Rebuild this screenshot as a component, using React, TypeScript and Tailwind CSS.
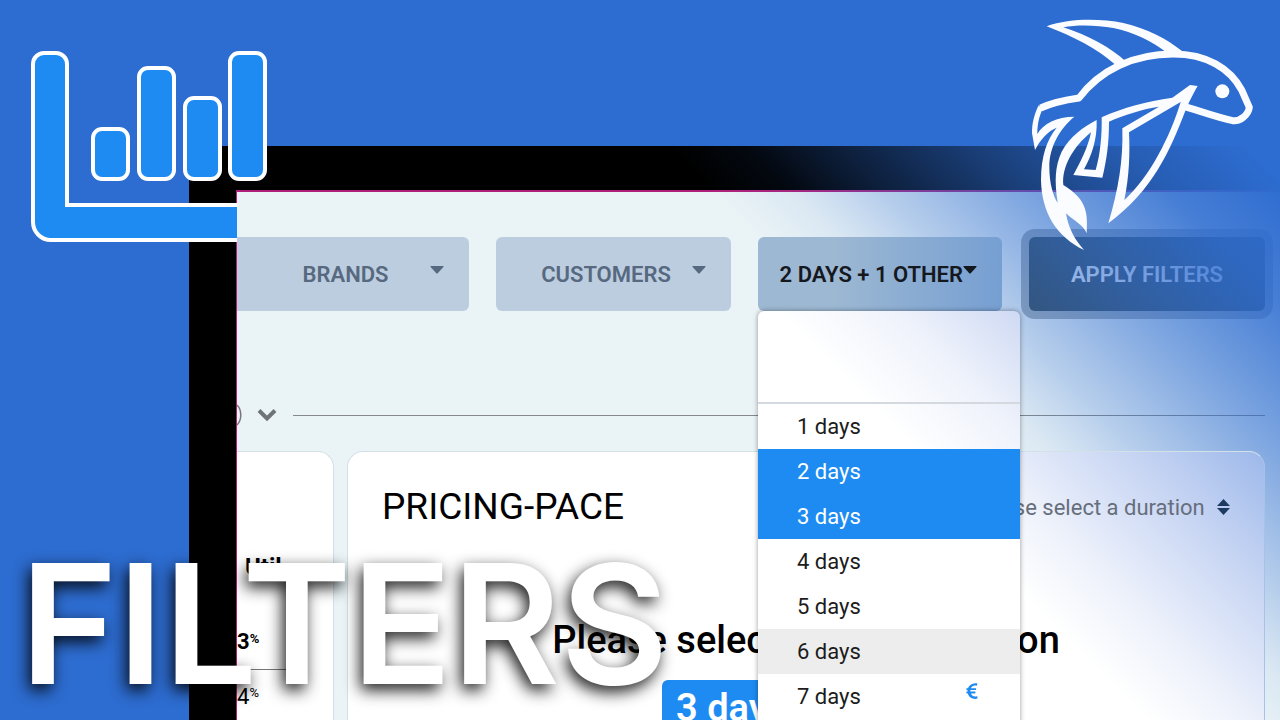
import { useState } from "react";
import { FaEuroSign } from "react-icons/fa";

const durations = ["1 days", "2 days", "3 days", "4 days", "5 days", "6 days", "7 days"];

const ChartLogo = () => (
  <svg className="absolute left-7 top-12 z-10" width="242" height="198" viewBox="28 48 242 198" aria-hidden="true">
    <g fill="#1e8bf2" stroke="#fff" strokeWidth="4">
      <path d="M237 205H67V64a11 11 0 0 0-11-11H44a11 11 0 0 0-11 11V222a18 18 0 0 0 18 18H237" />
      <rect x="93" y="129" width="35" height="50" rx="9" />
      <rect x="139" y="68" width="35" height="111" rx="9" />
      <rect x="185" y="98" width="35" height="81" rx="9" />
      <rect x="230" y="53" width="35" height="126" rx="9" />
    </g>
  </svg>
);

const WhaleLogo = () => (
  <svg className="absolute right-0 top-0 z-30" width="270" height="270" viewBox="0 0 810 810" aria-hidden="true">
    <g fill="#fafcff" fillRule="evenodd">
      <path d="M110 79C180 54 270 56 340 69C410 85 470 116 520 156L472 160C430 124 370 97 310 84C260 75 200 74 160 82C235 106 303 143 350 187L318 196C262 146 190 110 110 79Z" />
      <path d="M275 352C340 322 410 304 487 293L540 255L563 258C550 280 535 310 525 335C480 450 430 570 295 670C325 570 340 480 337 385L447 320C400 326 340 346 297 365C297 430 290 480 277 533L190 525C210 490 235 440 243 397C190 440 155 500 160 555C225 595 235 630 230 700C220 675 195 665 168 640C175 685 195 720 222 750C140 710 95 640 93 540C93 470 110 420 140 383C115 392 90 420 75 450L66 400C66 370 72 345 86 316L98 328C86 350 82 380 82 402C100 370 140 350 193 350C150 385 118 440 118 500C118 550 130 590 143 608C133 540 135 500 155 455C180 410 220 380 260 360C262 420 245 465 222 508L257 510C272 460 276 400 275 352ZM357 397L512 306C480 410 420 530 343 600C358 530 360 460 357 397Z" />
      <circle cx="637" cy="274" r="21" />
    </g>
    <path
      d="M92 324C125 309 165 300 207 294C270 210 370 162 490 162C590 162 660 205 695 270L718 322C715 345 690 365 668 362C620 352 575 335 525 320"
      fill="none"
      stroke="#fafcff"
      strokeWidth="21"
      strokeLinejoin="round"
    />
  </svg>
);

const Caret = () => (
  <svg className="mb-2 shrink-0" width="14" height="8" viewBox="0 0 14 8" fill="currentColor" aria-hidden="true">
    <path d="M1 0H13Q14 0 13.400 1L7.700 7.300Q7 8 6.300 7.300L.6 1Q0 0 1 0Z" />
  </svg>
);

export default function App() {
  const [open, setOpen] = useState(true);
  const [selected, setSelected] = useState(["2 days", "3 days"]);

  const toggle = (d: string) => {
    setSelected(selected.includes(d) ? selected.filter((s) => s !== d) : [...selected, d]);
  };

  return (
    <div className="relative flex h-screen flex-col overflow-hidden bg-[#2d6cd0] pl-[189px] pt-[146px] font-[Roboto,sans-serif]">
      <div className="flex flex-1 flex-col bg-black pl-[47px] pt-11">
        <main className="flex flex-1 flex-col border-l border-t-2 border-[#b0207a] bg-[#eaf3f6] pr-[15px] pt-[45px]">
          <div className="grid grid-cols-[232fr_235fr_244fr_236fr] gap-[27px] text-[22px] font-semibold">
            <button type="button" className="flex h-[74px] items-center rounded-r-md bg-[#bdcde0] pr-[25px] text-[#56697f]">
              <span className="flex-1 pl-6 text-center">BRANDS</span>
              <Caret />
            </button>
            <button type="button" className="flex h-[74px] items-center rounded-md bg-[#bdcde0] pr-[25px] text-[#56697f]">
              <span className="flex-1 pl-6 text-center">CUSTOMERS</span>
              <Caret />
            </button>
            <div className="relative z-20">
              <button
                type="button"
                aria-haspopup="listbox"
                aria-expanded={open}
                onClick={() => setOpen(!open)}
                className="flex h-[74px] w-full items-center rounded-md bg-linear-to-r from-[#9db8d2] from-30% to-[#769fd2] pr-[25px] text-[#15191f]"
              >
                <span className="flex-1 whitespace-nowrap pl-5 text-right">2 DAYS + 1 OTHER</span>
                <Caret />
              </button>
              {open && (
                <div className="absolute left-0 top-full w-[262px] rounded-t-md bg-white bg-[linear-gradient(45deg,#ffffff_64%,#eef2fb_82%,#ced9f3_100%)] pb-2 font-normal text-[#1c1c1c] shadow-[0_0_5px_rgba(0,0,0,0.4)]">
                  <div className="h-[93px] border-b-2 border-[#d4d8df]"></div>
                  <ul role="listbox" aria-multiselectable="true" aria-label="Duration">
                    {durations.map((d) => (
                      <li
                        key={d}
                        role="option"
                        aria-selected={selected.includes(d)}
                        onClick={() => toggle(d)}
                        className={
                          "flex h-[45px] cursor-pointer items-center justify-between px-[39px] " +
                          (selected.includes(d) ? "bg-[#1e8bf2] text-white" : d === "6 days" ? "bg-[#ededed]" : "")
                        }
                      >
                        {d}
                        {d === "7 days" && <FaEuroSign className="mb-3 size-[18px] text-[#1e8bf2]" />}
                      </li>
                    ))}
                  </ul>
                </div>
              )}
            </div>
            <button type="button" className="h-[74px] rounded-md bg-[#374b58] text-white ring-8 ring-[#a1acb4]">
              APPLY FILTERS
            </button>
          </div>

          <div className="mt-[92px] flex h-6 items-center">
            <svg width="5" height="22" viewBox="0 0 5 22" fill="none" stroke="#777" strokeWidth="1.500" aria-hidden="true">
              <path d="M0 1C5 6 5 16 0 21" />
            </svg>
            <svg className="ml-[15px]" width="20" height="14" viewBox="0 0 20 14" fill="none" stroke="#6f7478" strokeWidth="4" aria-hidden="true">
              <path d="M2 2.500L10 10.500L18 2.500" />
            </svg>
            <div className="ml-4 h-px flex-1 bg-[#85898c]"></div>
          </div>

          <div className="mt-6 flex flex-1 gap-[13px]">
            <section className="w-[97px] rounded-tr-2xl border-r border-t border-[#d3e0e8] bg-white pt-[67px]">
              <table className="w-12 text-[22px] text-black">
                <thead>
                  <tr className="h-24">
                    <th className="pl-2 text-left text-2xl font-bold">Util.</th>
                  </tr>
                </thead>
                <tbody>
                  <tr className="h-[54px] border-b border-[#777]">
                    <td className="font-bold">3<sup className="text-[13px]">%</sup></td>
                  </tr>
                  <tr className="h-[54px]">
                    <td>4<sup className="text-[13px]">%</sup></td>
                  </tr>
                </tbody>
              </table>
            </section>

            <section className="relative z-10 min-w-0 flex-1 rounded-t-2xl border border-b-0 border-[#d3e0e8] border-r-[#a9c1e6] bg-white bg-[linear-gradient(45deg,#ffffff_68%,#eef2fb_76%,#c6d4f3_89%,#9cb8ea_100%)] pl-[34px] pr-[34px] pt-[27px] text-black">
              <div className="flex h-14 items-center justify-between">
                <h2 className="text-[37px]">PRICING-PACE</h2>
                <label className="flex items-center gap-3 text-[22px] text-[#666e7c]">
                  <select aria-label="Duration" className="appearance-none bg-transparent">
                    <option>Please select a duration</option>
                  </select>
                  <svg width="13" height="16" viewBox="0 0 13 16" fill="#1f3a60" aria-hidden="true">
                    <path d="M6.500 0L13 7H0ZM6.500 16L0 9H13Z" />
                  </svg>
                </label>
              </div>
              <div className="mt-[77px] flex flex-col items-center gap-3">
                <p className="whitespace-nowrap text-[38px] font-medium leading-[56px]">Please select a given duration</p>
                <div className="flex w-[288px]">
                  <button type="button" className="h-14 rounded-md bg-[#1e8bf2] px-3.5 text-[38px] font-semibold text-white">
                    3 days
                  </button>
                </div>
              </div>
            </section>
          </div>
        </main>
      </div>

      <div className="pointer-events-none absolute inset-0 bg-[linear-gradient(45deg,#2d6cd000_62%,#2d6cd014_66%,#2d6cd04d_71%,#2d6cd099_78%,#2d6cd0de_85%,#2d6cd0_91%)]"></div>

      <ChartLogo />
      <WhaleLogo />
      <h1 className="pointer-events-none absolute bottom-0 left-5 z-30 font-[Inter,sans-serif] text-[166px] font-semibold leading-[192px] text-white [text-shadow:-3px_6px_16px_rgba(0,0,0,0.9)]">
        FILTERS
      </h1>
    </div>
  );
}
